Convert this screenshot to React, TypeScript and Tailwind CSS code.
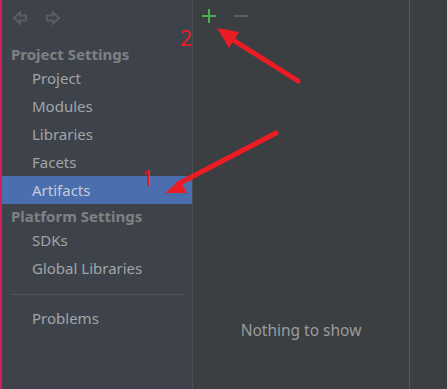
import React from "react";

// sidebar rows
const projectItems = ["Project", "Modules", "Libraries", "Facets", "Artifacts"];
const platformItems = ["SDKs", "Global Libraries"];

function NavArrow({ dir }: { dir: "left" | "right" }) {
  const d =
    dir === "left"
      ? "M2 8 L8 2.5 L8 5.5 L14 5.5 L14 10.5 L8 10.5 L8 13.5 Z"
      : "M14 8 L8 2.5 L8 5.5 L2 5.5 L2 10.5 L8 10.5 L8 13.5 Z";
  return (
    <svg width="16" height="16" viewBox="0 0 16 16">
      <path d={d} fill="none" stroke="#5b5e61" strokeWidth="2" strokeLinejoin="miter" />
    </svg>
  );
}

function Row({ label, selected }: { label: string; selected?: boolean }) {
  return (
    <div
      className={`h-[28px] flex items-center pl-[30px] text-[15px] text-[#a2a4a6] ${
        selected ? "bg-[#4b6eaf] text-[#c4cbd6]" : ""
      }`}
    >
      {label}
    </div>
  );
}

function Header({ label, className = "" }: { label: string; className?: string }) {
  return (
    <div className={`flex items-center pl-[9px] text-[15px] font-bold text-[#7f8183] ${className}`}>
      {label}
    </div>
  );
}

export default function App() {
  return (
    <div
      className="relative w-[447px] h-[389px] overflow-hidden flex bg-[#3c3f41] border-l-2 border-[#d0215f]"
      style={{ fontFamily: '"Noto Sans", "Open Sans", sans-serif' }}
    >
      {/* sidebar */}
      <div className="w-[191px] shrink-0 bg-[#3e434b] border-r border-[#4f5254] flex flex-col">
        <div className="h-[40px] flex items-center gap-[17px] pl-[10px] pb-[4px]">
          <NavArrow dir="left" />
          <NavArrow dir="right" />
        </div>
        <Header label="Project Settings" className="h-[24px] pt-[4px]" />
        {projectItems.map((item) => (
          <Row key={item} label={item} selected={item === "Artifacts"} />
        ))}
        <Header label="Platform Settings" className="h-[22px] pt-[2px]" />
        {platformItems.map((item) => (
          <Row key={item} label={item} />
        ))}
        <div className="mt-[12px] mb-[9px] mx-[9px] h-px bg-[#51545a]" />
        <Row label="Problems" />
      </div>

      {/* artifacts list */}
      <div className="w-[217px] shrink-0 border-r border-[#56595b] flex flex-col">
        <div className="h-[32px] flex items-center gap-[16px] pl-[8px]">
          <svg width="16" height="16" viewBox="0 0 16 16">
            <path d="M8 1 V15 M1 8 H15" stroke="#4caf50" strokeWidth="2" />
          </svg>
          <svg width="16" height="16" viewBox="0 0 16 16">
            <path d="M1 8 H15" stroke="#5c5f61" strokeWidth="2" />
          </svg>
        </div>
        <div className="pt-[287px] text-center text-[15.5px] text-[#999b9d]">Nothing to show</div>
      </div>

      <div className="flex-1" />

      {/* red annotations */}
      <div className="absolute left-[178px] top-[28px] text-[21px] leading-none text-[#ec1c24]">2</div>
      <div className="absolute left-[140px] top-[168px] text-[21px] leading-none text-[#ec1c24]">1</div>
      <svg className="absolute left-[-2px] top-0" width="447" height="389" viewBox="0 0 447 389">
        <line x1="298" y1="81" x2="230" y2="38" stroke="#ec1c24" strokeWidth="5" strokeLinecap="round" />
        <polygon points="217,28 239,32 229,48" fill="#ec1c24" />
        <line x1="276" y1="133" x2="178" y2="184" stroke="#ec1c24" strokeWidth="5" strokeLinecap="round" />
        <polygon points="165,193 180,180 187,193" fill="#ec1c24" />
      </svg>
    </div>
  );
}
